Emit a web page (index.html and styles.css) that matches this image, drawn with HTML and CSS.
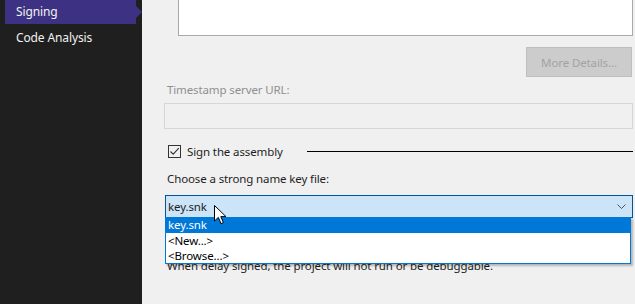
FILE: index.html
```html
<!DOCTYPE html>
<html>
<head>
<meta charset="utf-8">
<link rel="stylesheet" href="styles.css">
</head>
<body>
<div class="app">
  <nav class="sidebar">
    <div class="nav-item active">Signing</div>
    <div class="nav-item">Code Analysis</div>
  </nav>
  <main class="main">
    <div class="cert-box"></div>
    <div class="btn-row"><button class="btn" disabled>More Details...</button></div>
    <div class="label disabled">Timestamp server URL:</div>
    <div class="input disabled-input"></div>
    <div class="check-row">
      <span class="checkbox"><svg width="11" height="11" viewBox="0 0 11 11"><path d="M1.5 5.5 L4.2 8.2 L9.8 2.2" fill="none" stroke="#333" stroke-width="1.1"/></svg></span>
      <span class="check-label">Sign the assembly</span>
      <span class="rule"></span>
    </div>
    <div class="label">Choose a strong name key file:</div>
    <div class="combo-wrap">
      <div class="combo">
        <span>key.snk</span>
        <svg class="chev" width="9" height="5" viewBox="0 0 9 5"><path d="M0.5 0.5 L4.5 4.5 L8.5 0.5" fill="none" stroke="#555" stroke-width="1"/></svg>
      </div>
      <ul class="dropdown">
        <li class="sel">key.snk</li>
        <li>&lt;New...&gt;</li>
        <li>&lt;Browse...&gt;</li>
      </ul>
      <svg class="cursor" width="14" height="21" viewBox="0 0 14 21"><path d="M0.5 0.5 L0.5 16 L4.3 12.4 L7 18.6 L9.4 17.6 L6.8 11.6 L12 11.6 Z" fill="#fff" stroke="#000" stroke-width="1" stroke-linejoin="miter"/></svg>
    </div>
    <div class="note">When delay signed, the project will not run or be debuggable.</div>
  </main>
</div>
</body>
</html>
```
FILE: styles.css
```css
html, body {
  margin: 0;
  padding: 0;
  height: 100%;
  overflow: hidden;
}
body {
  font-family: "Segoe UI", "Noto Sans", "Open Sans", sans-serif;
  font-size: 11.5px;
  letter-spacing: -0.12px;
  color: #1e1e1e;
  background: #f0f0f0;
}
.app {
  display: flex;
  height: 304px;
}
.sidebar {
  width: 142px;
  flex: none;
  background: #1f1f1f;
  padding-left: 5px;
  box-sizing: border-box;
}
.nav-item {
  color: #f1f1f1;
  height: 24px;
  line-height: 24px;
  padding-left: 11px;
  font-size: 12px;
}
.nav-item + .nav-item {
  padding-top: 2px;
}
.nav-item.active {
  background: #3d3183;
  margin-right: 6px;
  position: relative;
}
.nav-item.active::after {
  content: "";
  position: absolute;
  right: -6px;
  top: 6px;
  border-left: 6px solid #3d3183;
  border-top: 6px solid transparent;
  border-bottom: 6px solid transparent;
}
.main {
  flex: 1;
  padding: 0 2px 0 22px;
  display: flex;
  flex-direction: column;
}
.cert-box {
  margin-left: 14px;
  height: 35px;
  background: #fff;
  border: 1px solid #a9a9a9;
  border-top: none;
  flex: none;
}
.btn-row {
  display: flex;
  justify-content: flex-end;
  margin-top: 11px;
  padding-right: 1px;
}
.btn {
  width: 106px;
  height: 30px;
  background: #cccccc;
  border: 1px solid #bfbfbf;
  color: #a3a3a3;
  font: inherit;
  letter-spacing: inherit;
  padding: 0;
}
.label {
  height: 16px;
  line-height: 16px;
  padding-left: 3px;
}
.label.disabled {
  color: #8f8f8f;
  margin-top: 5px;
}
.input {
  height: 26px;
  box-sizing: border-box;
  margin-top: 5px;
  border: 1px solid #d6d6d6;
  background: #f0f0f0;
  flex: none;
}
.check-row {
  display: flex;
  align-items: center;
  margin-top: 15px;
  height: 14px;
  margin-left: 4px;
}
.checkbox {
  width: 13px;
  height: 13px;
  box-sizing: border-box;
  border: 1px solid #333;
  background: #f0f0f0;
  display: flex;
  align-items: center;
  justify-content: center;
}
.check-label {
  margin-left: 6px;
}
.rule {
  flex: 1;
  height: 1px;
  background: #000;
  margin-left: 24px;
}
.check-row + .label {
  margin-top: 13px;
}
.combo-wrap {
  position: relative;
  margin-top: 8px;
  margin-left: 1px;
}
.combo {
  height: 23px;
  box-sizing: border-box;
  background: #cce4f7;
  border: 1px solid #005499;
  display: flex;
  align-items: center;
  justify-content: space-between;
  padding: 0 6px 0 2px;
}
.chev {
  display: block;
}
.dropdown {
  position: absolute;
  left: 0;
  right: 2px;
  top: 22px;
  margin: 0;
  padding: 0;
  list-style: none;
  background: #fff;
  border: 1px solid #0078d7;
  border-top: none;
  box-shadow: 2px 2px 2px rgba(0,0,0,0.25);
  z-index: 2;
}
.dropdown li {
  height: 15px;
  line-height: 15px;
  padding-left: 2px;
  color: #000;
}
.dropdown li.sel {
  background: #0078d7;
  color: #fff;
  height: 16px;
}
.cursor {
  position: absolute;
  left: 49px;
  top: 10px;
  z-index: 3;
}
.note {
  margin-top: 40px;
  padding-left: 3px;
  height: 16px;
  line-height: 16px;
  color: #1e1e1e;
}
```
